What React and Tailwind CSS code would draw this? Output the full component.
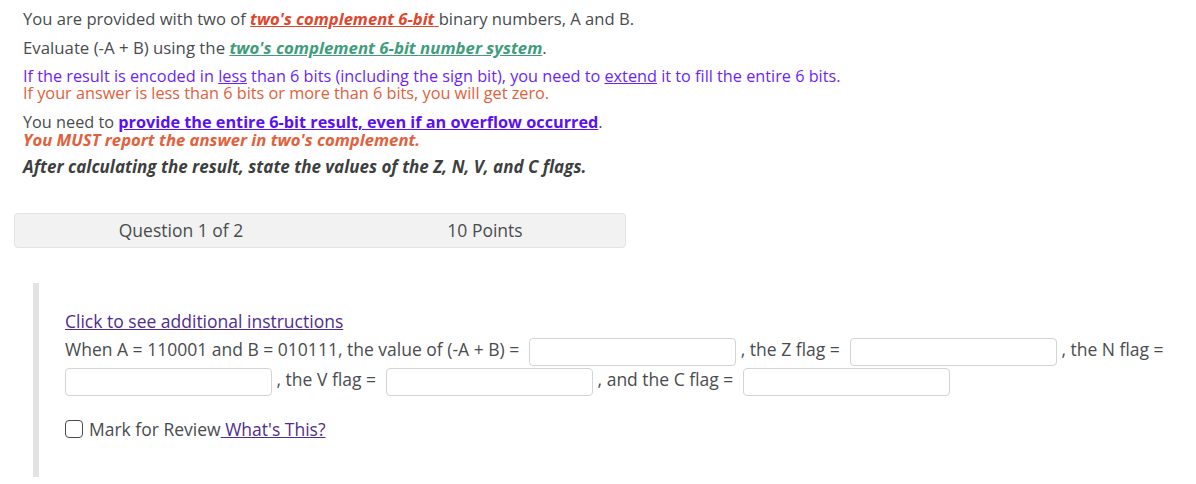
import React from "react";

const RED = "text-[#e0462d]";
const ORANGE = "text-[#e2603c]";

function Blank({ w = "w-[207px]", ml = "ml-[10px]" }) {
  return (
    <span className={`inline-block align-middle -my-[3px] ${ml} ${w} h-[28px] border border-[#d3d4d6] rounded-[4px] bg-white`} />
  );
}

export default function App() {
  return (
    <div className="w-[1196px] h-[484px] bg-white text-[#494c4e] font-['Open_Sans',sans-serif] text-[17.5px] overflow-hidden">
      {/* INSTRUCTIONS */}
      <div className="pl-[23px] pt-[8px]">
        <p className="leading-[22px] text-[16.6px]">
          You are provided with two of{" "}
          <span className={`${RED} font-bold italic underline`}>two's complement 6-bit</span>
          <span className="underline decoration-[#e0462d]"> </span>binary numbers, A and B.
        </p>
        <p className="leading-[22px] mt-[7px] text-[16.8px]">
          Evaluate (-A + B) using the{" "}
          <span className="text-[#3f9d7c] font-bold italic underline">two's complement 6-bit number system</span>.
        </p>
        <p className="leading-[17px] mt-[9px] text-[16.25px] text-[#6b1ffc]">
          If the result is encoded in <span className="underline">less</span> than 6 bits (including the sign bit), you need to{" "}
          <span className="underline">extend</span> it to fill the entire 6 bits.
        </p>
        <p className={`leading-[17px] text-[16.25px] ${ORANGE}`}>
          If your answer is less than 6 bits or more than 6 bits, you will get zero.
        </p>
        <p className="leading-[17px] mt-[12px] text-[16.25px]">
          You need to{" "}
          <span className="text-[#5a10f5] font-bold underline">provide the entire 6-bit result, even if an overflow occurred</span>.
        </p>
        <p className={`leading-[17px] text-[16.7px] ${ORANGE} font-bold italic`}>You MUST report the answer in two's complement.</p>
        <p className="leading-[22px] mt-[8px] text-[17px] font-bold italic text-[#3d3f41]">
          After calculating the result, state the values of the Z, N, V, and C flags.
        </p>
      </div>

      {/* QUESTION HEADER */}
      <div className="ml-[14px] mt-[35px] w-[612px] h-[35px] flex items-center bg-[#f2f2f2] border border-[#e3e3e3] rounded-[4px]">
        <div className="w-[332px] text-center">Question 1 of 2</div>
        <div className="w-[276px] text-center">10 Points</div>
      </div>

      {/* QUESTION BODY */}
      <div className="ml-[33px] mt-[35px] h-[194px] border-l-[6px] border-[#e3e3e4] pl-[26px] pt-[25px]">
        <a className="underline text-[#4f2d8f] leading-[22px]">Click to see additional instructions</a>
        <div className="leading-[30px]">
          When A = 110001 and B = 010111, the value of (-A + B) =<Blank /> , the Z flag =<Blank /> , the N flag =
          <br />
          <Blank ml="ml-0" /> , the V flag =<Blank /> , and the C flag =<Blank />
        </div>
        <div className="mt-[23px] flex items-center leading-[24px]">
          <span className="inline-block w-[18px] h-[18px] border-[1.5px] border-[#494c4e] rounded-[4px] mr-[6px]" />
          <span>Mark for Review</span>
          <a className="underline text-[#4f2d8f]">&nbsp;What's This?</a>
        </div>
      </div>
    </div>
  );
}
